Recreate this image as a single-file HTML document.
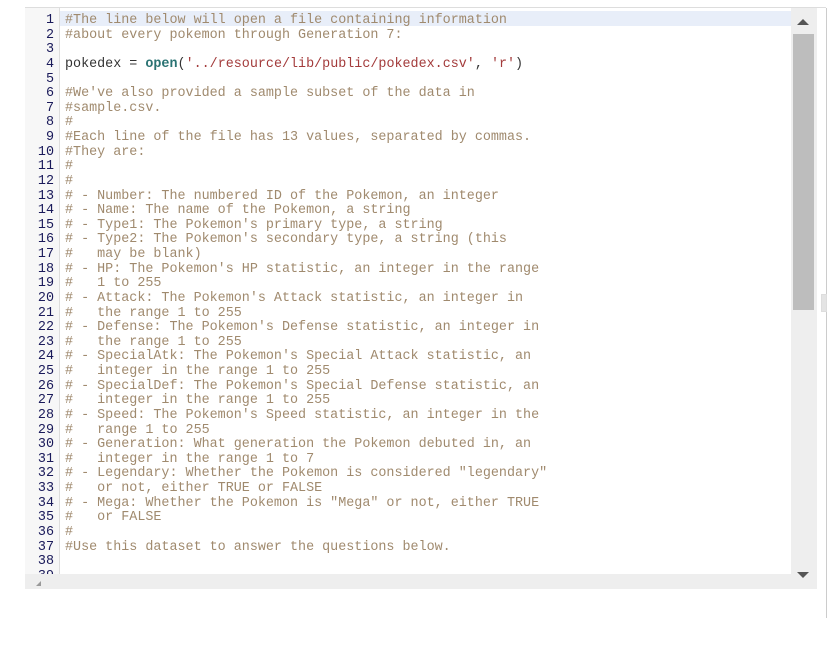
<!DOCTYPE html>
<html><head><style>
body{margin:0;width:835px;height:646px;background:#fff;position:relative;overflow:hidden;font-family:"Liberation Mono",monospace;}
.top{position:absolute;left:25px;top:7px;width:801px;height:1px;background:#ddd}
.vline{position:absolute;left:826px;top:8px;width:1px;height:610px;background:#ccc}
.gut{position:absolute;left:25px;top:8px;width:34px;height:566px;background:#f7f7f7;border-right:1px solid #ddd}
.hl{position:absolute;left:60px;top:11px;width:731px;height:15px;background:#e8eef9}
.code{position:absolute;left:0;top:8px;width:791px;height:566px;overflow:hidden}
.in{position:absolute;left:0;top:6px;width:791px}
.l{height:14.64px;line-height:14.64px;font-size:13.4px;white-space:pre;position:relative}
.n{position:absolute;left:25px;width:29px;text-align:right;color:#1a1a5a}
.t{position:absolute;left:65px;color:#a08a6e}
.p{color:#333}.b{color:#2a7373;font-weight:bold}.s{color:#a33b3b}
.vs{position:absolute;left:791px;top:8px;width:26px;height:566px;background:#eee}
.th{position:absolute;left:793px;top:34px;width:21px;height:276px;background:#bdbdbd}
.hs{position:absolute;left:25px;top:574px;width:792px;height:15px;background:#eee}
.up{position:absolute;left:797px;top:19px;width:0;height:0;border-left:6px solid transparent;border-right:6px solid transparent;border-bottom:6px solid #555}
.dn{position:absolute;left:797px;top:572px;width:0;height:0;border-left:6px solid transparent;border-right:6px solid transparent;border-top:6px solid #555}
.cor{position:absolute;left:36px;top:581px;width:0;height:0;border-left:5px solid transparent;border-bottom:5px solid #999}
.grip{position:absolute;left:821px;top:294px;width:4px;height:16px;background:#e4e4e4;border:1px solid #ddd}
</style></head><body>
<div class="top"></div><div class="vline"></div>
<div class="gut"></div><div class="hl"></div>
<div class="code"><div class="in">
<div class="l"><span class="n">1</span><span class="t">#The line below will open a file containing information</span></div>
<div class="l"><span class="n">2</span><span class="t">#about every pokemon through Generation 7:</span></div>
<div class="l"><span class="n">3</span></div>
<div class="l"><span class="n">4</span><span class="t p">pokedex = <span class="b">open</span>(<span class="s">'../resource/lib/public/pokedex.csv'</span>, <span class="s">'r'</span>)</span></div>
<div class="l"><span class="n">5</span></div>
<div class="l"><span class="n">6</span><span class="t">#We've also provided a sample subset of the data in</span></div>
<div class="l"><span class="n">7</span><span class="t">#sample.csv.</span></div>
<div class="l"><span class="n">8</span><span class="t">#</span></div>
<div class="l"><span class="n">9</span><span class="t">#Each line of the file has 13 values, separated by commas.</span></div>
<div class="l"><span class="n">10</span><span class="t">#They are:</span></div>
<div class="l"><span class="n">11</span><span class="t">#</span></div>
<div class="l"><span class="n">12</span><span class="t">#</span></div>
<div class="l"><span class="n">13</span><span class="t"># - Number: The numbered ID of the Pokemon, an integer</span></div>
<div class="l"><span class="n">14</span><span class="t"># - Name: The name of the Pokemon, a string</span></div>
<div class="l"><span class="n">15</span><span class="t"># - Type1: The Pokemon's primary type, a string</span></div>
<div class="l"><span class="n">16</span><span class="t"># - Type2: The Pokemon's secondary type, a string (this</span></div>
<div class="l"><span class="n">17</span><span class="t">#   may be blank)</span></div>
<div class="l"><span class="n">18</span><span class="t"># - HP: The Pokemon's HP statistic, an integer in the range</span></div>
<div class="l"><span class="n">19</span><span class="t">#   1 to 255</span></div>
<div class="l"><span class="n">20</span><span class="t"># - Attack: The Pokemon's Attack statistic, an integer in</span></div>
<div class="l"><span class="n">21</span><span class="t">#   the range 1 to 255</span></div>
<div class="l"><span class="n">22</span><span class="t"># - Defense: The Pokemon's Defense statistic, an integer in</span></div>
<div class="l"><span class="n">23</span><span class="t">#   the range 1 to 255</span></div>
<div class="l"><span class="n">24</span><span class="t"># - SpecialAtk: The Pokemon's Special Attack statistic, an</span></div>
<div class="l"><span class="n">25</span><span class="t">#   integer in the range 1 to 255</span></div>
<div class="l"><span class="n">26</span><span class="t"># - SpecialDef: The Pokemon's Special Defense statistic, an</span></div>
<div class="l"><span class="n">27</span><span class="t">#   integer in the range 1 to 255</span></div>
<div class="l"><span class="n">28</span><span class="t"># - Speed: The Pokemon's Speed statistic, an integer in the</span></div>
<div class="l"><span class="n">29</span><span class="t">#   range 1 to 255</span></div>
<div class="l"><span class="n">30</span><span class="t"># - Generation: What generation the Pokemon debuted in, an</span></div>
<div class="l"><span class="n">31</span><span class="t">#   integer in the range 1 to 7</span></div>
<div class="l"><span class="n">32</span><span class="t"># - Legendary: Whether the Pokemon is considered "legendary"</span></div>
<div class="l"><span class="n">33</span><span class="t">#   or not, either TRUE or FALSE</span></div>
<div class="l"><span class="n">34</span><span class="t"># - Mega: Whether the Pokemon is "Mega" or not, either TRUE</span></div>
<div class="l"><span class="n">35</span><span class="t">#   or FALSE</span></div>
<div class="l"><span class="n">36</span><span class="t">#</span></div>
<div class="l"><span class="n">37</span><span class="t">#Use this dataset to answer the questions below.</span></div>
<div class="l"><span class="n">38</span></div>
<div class="l"><span class="n">39</span></div>
</div></div>
<div class="vs"></div><div class="th"></div><div class="up"></div>
<div class="hs"></div><div class="dn"></div><div class="cor"></div><div class="grip"></div>
</body></html>
